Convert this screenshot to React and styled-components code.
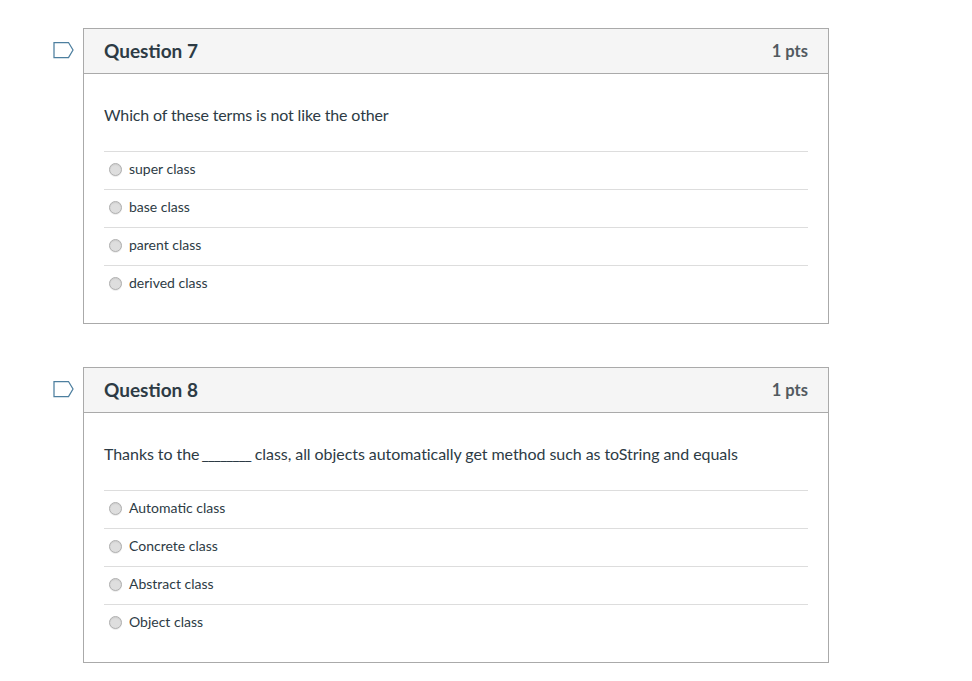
import React from "react";
import styled, { createGlobalStyle } from "styled-components";

const Global = createGlobalStyle`
  html, body { margin: 0; padding: 0; background: #fff; }
  body { font-family: Lato, "Liberation Sans", sans-serif; color: #2d3b45; }
`;

const Page = styled.div`
  width: 972px;
  height: 681px;
  overflow: hidden;
  box-sizing: border-box;
  padding: 28px 0 0 83px;
  display: flex;
  flex-direction: column;
  gap: 43px;
`;

const Card = styled.section`
  position: relative;
  width: 746px;
  height: 296px;
  box-sizing: border-box;
  border: 1px solid #aaa;
`;

const Flag = styled.svg`
  position: absolute;
  left: -31px;
  top: 12px;
  width: 22px;
  height: 18px;
`;

const Header = styled.header`
  height: 45px;
  box-sizing: border-box;
  background: #f5f5f5;
  border-bottom: 1px solid #aaa;
  padding: 0 20px;
  display: flex;
  align-items: flex-start;
  justify-content: space-between;
`;

const Title = styled.h2`
  margin: 0;
  font-size: 19px;
  font-weight: 700;
  line-height: 43px;
  color: #2d3b45;
`;

const Points = styled.span`
  font-size: 16.5px;
  font-weight: 700;
  line-height: 45px;
  color: #525a60;
`;

const Body = styled.div`
  padding: 30px 20px 0;
`;

const Prompt = styled.p`
  margin: 0 0 26px;
  font-size: 16px;
  line-height: 21px;
  height: 21px;
  letter-spacing: ${(p) => p.$tracking}px;
  color: #2d3b45;
`;

const Blank = styled.span`
  letter-spacing: -1.2px;
  margin-left: -2px;
`;

const Answers = styled.ul`
  list-style: none;
  margin: 0;
  padding: 0;
`;

const Answer = styled.li`
  height: 38px;
  box-sizing: border-box;
  border-top: 1px solid #ddd;
  padding: 0 0 2px 5px;
  display: flex;
  align-items: center;
  gap: 7px;
  font-size: 14px;
  color: #2d3b45;
`;

const Label = styled.span`
  margin-bottom: 2px;
`;

const Radio = styled.span`
  width: 13px;
  height: 13px;
  box-sizing: border-box;
  border-radius: 50%;
  flex: none;
  background: #dedede;
  border: 1px solid #b0b0b0;
  box-shadow: inset 0 1px 1px #cccccc, 0 1px 0 #eee;
`;

const questions = [
  {
    title: "Question 7",
    tracking: -0.14,
    prompt: <>Which of these terms is not like the other</>,
    answers: ["super class", "base class", "parent class", "derived class"],
  },
  {
    title: "Question 8",
    tracking: -0.06,
    prompt: (
      <>
        Thanks to the <Blank>________</Blank> class, all objects automatically get method such as toString and equals
      </>
    ),
    answers: ["Automatic class", "Concrete class", "Abstract class", "Object class"],
  },
];

export default function App() {
  return (
    <Page>
      <Global />
      {questions.map((q) => (
        <Card key={q.title}>
          <Flag viewBox="0 0 22 18" aria-hidden="true">
            <path d="M1 1.5H15.5L20 9L15.5 16.5H1Z" fill="#fff" stroke="#4d7f9f" strokeWidth="1.25" />
          </Flag>
          <Header>
            <Title>{q.title}</Title>
            <Points>1 pts</Points>
          </Header>
          <Body>
            <Prompt $tracking={q.tracking}>{q.prompt}</Prompt>
            <Answers>
              {q.answers.map((a) => (
                <Answer key={a}>
                  <Radio />
                  <Label>{a}</Label>
                </Answer>
              ))}
            </Answers>
          </Body>
        </Card>
      ))}
    </Page>
  );
}
